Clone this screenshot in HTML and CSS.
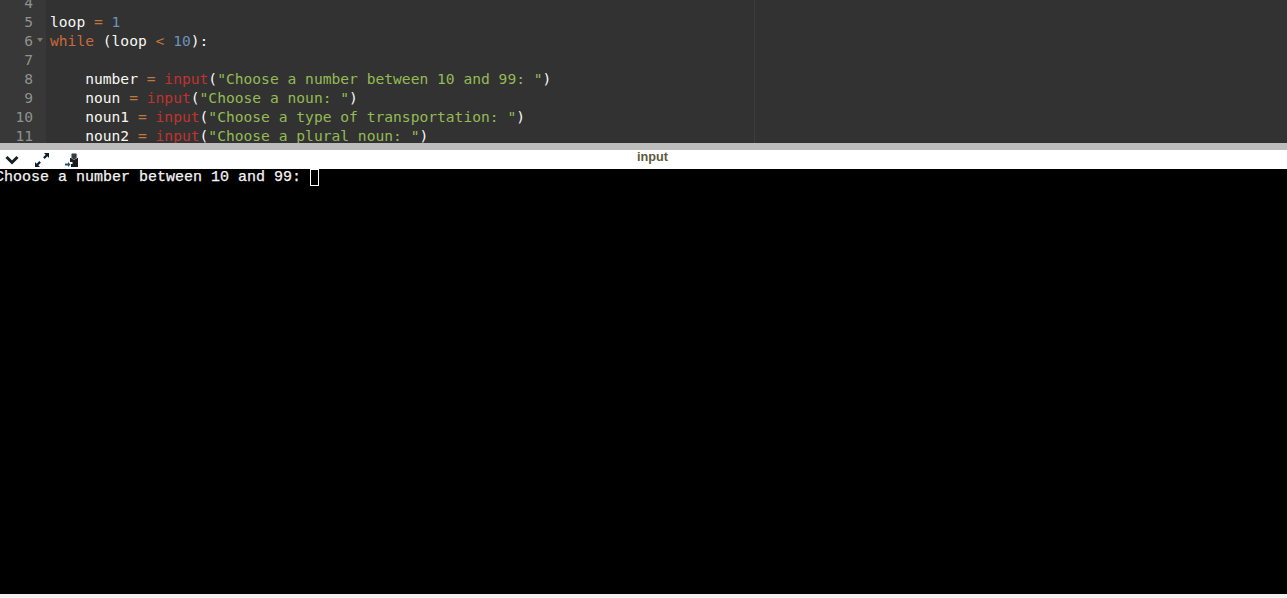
FILE: index.html
```html
<!DOCTYPE html>
<html lang="en">
<head>
<meta charset="utf-8">
<title>input</title>
<link rel="stylesheet" href="styles.css">
</head>
<body>
<div class="app">
  <section class="editor">
    <div class="gutter">
      <div class="num">4</div>
      <div class="num">5</div>
      <div class="num fold">6</div>
      <div class="num">7</div>
      <div class="num">8</div>
      <div class="num">9</div>
      <div class="num">10</div>
      <div class="num">11</div>
    </div>
    <div class="code">
      <div class="margin-line"></div>
      <div class="ln">&nbsp;</div>
      <div class="ln">loop <span class="op">=</span> <span class="n">1</span></div>
      <div class="ln"><span class="kw">while</span> (loop <span class="op">&lt;</span> <span class="n">10</span>):</div>
      <div class="ln">&nbsp;</div>
      <div class="ln">    number <span class="op">=</span> <span class="fn">input</span>(<span class="s">"Choose a number between 10 and 99: "</span>)</div>
      <div class="ln">    noun <span class="op">=</span> <span class="fn">input</span>(<span class="s">"Choose a noun: "</span>)</div>
      <div class="ln">    noun1 <span class="op">=</span> <span class="fn">input</span>(<span class="s">"Choose a type of transportation: "</span>)</div>
      <div class="ln">    noun2 <span class="op">=</span> <span class="fn">input</span>(<span class="s">"Choose a plural noun: "</span>)</div>
    </div>
  </section>
  <div class="splitter"></div>
  <header class="bar">
    <div class="tools">
      <svg class="ic ic-chev" viewBox="0 0 14 10"><path d="M1.5 2 7 7.5 12.5 2" fill="none" stroke="#1a1f26" stroke-width="3"/></svg>
      <svg class="ic ic-exp" viewBox="0 0 16 16"><path d="M10 1h5v5l-1.7-1.7-2.6 2.6-1.6-1.6 2.6-2.6zM6 15H1v-5l1.7 1.7 2.6-2.6 1.6 1.6-2.6 2.6z" fill="#10202e"/></svg>
      <svg class="ic ic-run" viewBox="0 0 16 16"><path d="M6 6h1.5L8 7h4l1-1h1v9H7v-3h1.5v-2H6z" fill="#1c1c1c"/><path d="M8 1.5h4l.7 1v3L11 7.5H9L7.5 5.5v-3z" fill="#3a3a3a" stroke="#6f9ab5" stroke-width=".6"/><path d="M1 11.5h3V10l2.5 2.5L4 15v-1.500H1z" fill="#1f4f73"/></svg>
    </div>
    <span class="title">input</span>
  </header>
  <main class="term"><div class="prompt">Choose a number between 10 and 99: <span class="cursor"></span></div></main>
  <div class="foot"></div>
</div>
</body>
</html>
```
FILE: styles.css
```css
* { box-sizing: border-box; }
html, body { margin: 0; height: 100%; overflow: hidden; background: #f1f1f1; }
.app { height: 598px; display: flex; flex-direction: column; }
.editor {
  height: 143px; flex: none; display: flex; overflow: hidden; background: #323232;
  font: 14.62px/19px "DejaVu Sans Mono", monospace;
}
.gutter { width: 46px; flex: none; margin-top: -7px; background: #383838; height: 160px; color: #8f938f; }
.num { height: 19px; text-align: right; padding-right: 13px; position: relative; }
.fold::after {
  content: ""; position: absolute; left: 37px; top: 7px;
  border: 3.5px solid transparent; border-top: 4px solid #7b7b6f; border-bottom: 0;
}
.code { flex: 1; margin-top: -7px; padding-left: 4px; color: #f8f8f2; position: relative; }
.margin-line { position: absolute; left: 708px; top: 0; bottom: 0; width: 1px; background: #3d3d3d; }
.ln { height: 19px; white-space: pre; }
.op { color: #c0783c; }
.kw { color: #c8693c; }
.n { color: #6a94b8; }
.fn { color: #c0322e; }
.s { color: #94bb55; }
.splitter { height: 7px; flex: none; background: #bcbcbc; }
.bar { height: 19px; flex: none; background: #fff; display: flex; align-items: center; position: relative; }
.tools { display: flex; align-items: center; padding-left: 5px; }
.ic { display: block; flex: none; }
.ic-chev { width: 14px; height: 10px; }
.ic-exp { width: 16px; height: 16px; margin-left: 15px; }
.ic-run { width: 16px; height: 16px; margin-left: 14px; }
.title {
  position: absolute; left: 637px; top: 0;
  font: bold 12.7px/14px "Liberation Sans", sans-serif; color: #5f5a3c;
}
.term { flex: none; height: 425px; background: #000; overflow: hidden; color: #f4f4f4; }
.prompt {
  margin-left: -5px; font: 15px/17px "Liberation Mono", monospace; white-space: pre; display: flex;
  -webkit-text-stroke: 0.25px #f4f4f4;
}
.cursor { width: 9px; height: 17px; border: 1px solid #fff; display: block; }
.foot { height: 4px; flex: none; background: #f1f1f1; }
```
